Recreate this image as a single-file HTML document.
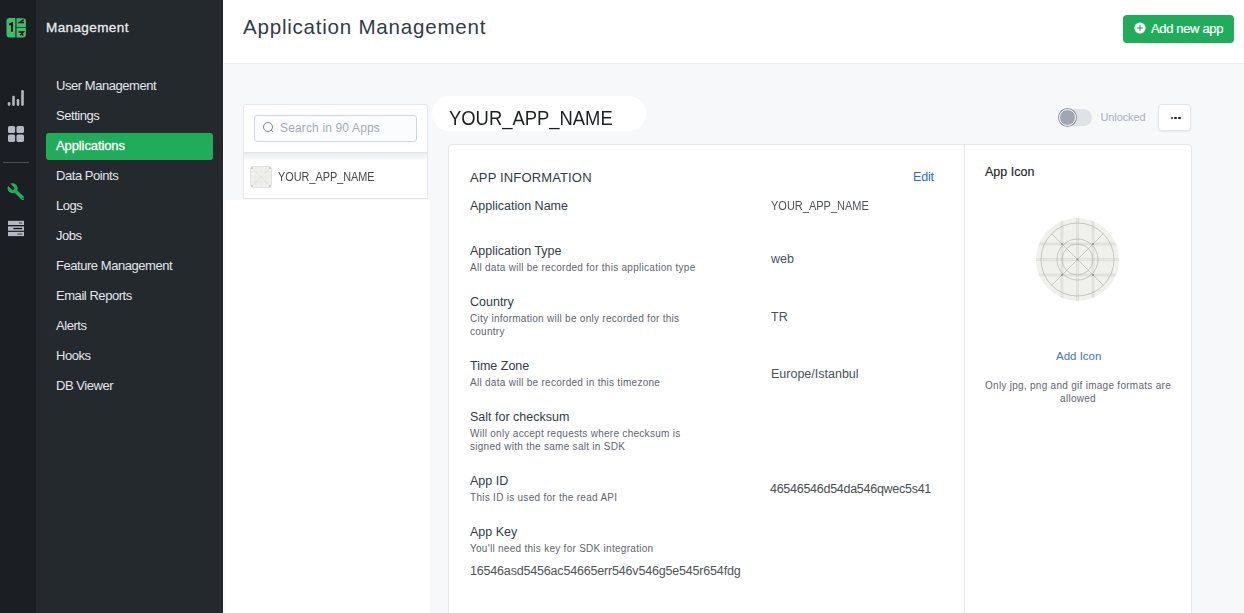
<!DOCTYPE html>
<html><head><meta charset="utf-8">
<style>
*{margin:0;padding:0;box-sizing:border-box}
html,body{width:1244px;height:613px;overflow:hidden}
body{position:relative;background:#f7f8f9;font-family:"Liberation Sans",sans-serif;color:#333c48}
.abs{position:absolute}
#icol{left:0;top:0;width:36px;height:613px;background:#1b1e22}
#menu{left:36px;top:0;width:187px;height:613px;background:#24292e}
#hdr{left:223px;top:0;width:1021px;height:64px;background:#fff;border-bottom:1px solid #e9eaec}
.mi{position:absolute;left:56px;font-size:13px;color:#e3e6ea;white-space:nowrap;line-height:16px;letter-spacing:-0.45px}
#sel{left:46px;top:133px;width:167px;height:27px;background:#1fad5a;border-radius:3px}
.t{position:absolute;white-space:nowrap;line-height:1}
.lab{position:absolute;left:470px;font-size:12.5px;color:#333c48;white-space:nowrap;line-height:1}
.desc{position:absolute;left:470px;font-size:10px;color:#5f6670;white-space:nowrap;line-height:13px;letter-spacing:0.28px}
.val{position:absolute;left:771px;font-size:12.5px;color:#4b525b;white-space:nowrap;line-height:1}
</style></head><body>
<div id="icol" class="abs"></div>
<div id="menu" class="abs"></div>
<div id="hdr" class="abs"></div>

<!-- logo -->
<svg class="abs" style="left:0;top:0" width="36" height="45" viewBox="0 0 36 45">
  <path d="M9.5 18 H15.4 V37.5 H9.5 Q6.5 37.5 6.5 34.5 V21 Q6.5 18 9.5 18 Z" fill="#3fbe6b"/>
  <path d="M16.5 18.2 H23 Q25.9 18.2 25.9 21 V27.2 H16.5 Z" fill="#3fbe6b"/>
  <path d="M16.5 28 H25.9 V34.5 Q25.9 37.5 23 37.5 H16.5 Z" fill="#3fbe6b"/>
  <path d="M9.1 24.6 L12 23.3 V31.7" stroke="#0d0f10" stroke-width="2" fill="none" stroke-linejoin="miter"/>
  <path d="M23.6 19.6 L19.4 22.6 H24" stroke="#0d0f10" stroke-width="1.5" fill="none"/>
  <path d="M18.6 32 H23.4 L20.2 35.2 M21.6 33.8 L23.4 35.4" stroke="#0d0f10" stroke-width="1.4" fill="none"/>
</svg>
<!-- chart icon -->
<svg class="abs" style="left:0;top:80px" width="36" height="30" viewBox="0 80 36 30">
  <g stroke="#b4b9c1" stroke-width="2.6" stroke-linecap="round">
    <line x1="9.1" y1="103.2" x2="9.1" y2="104.6"/>
    <line x1="13.5" y1="97" x2="13.5" y2="104.6"/>
    <line x1="18" y1="100.2" x2="18" y2="104.6"/>
    <line x1="22.5" y1="91.3" x2="22.5" y2="104.6"/>
  </g>
</svg>
<!-- grid icon -->
<svg class="abs" style="left:0;top:116px" width="36" height="36" viewBox="0 116 36 36">
  <g fill="#b4b9c1">
    <rect x="8" y="126" width="7.1" height="7.1" rx="1.6"/>
    <rect x="16.5" y="126" width="7.5" height="7.1" rx="1.6"/>
    <rect x="8" y="134.5" width="7.1" height="7.4" rx="1.6"/>
    <rect x="16.5" y="134.5" width="7.5" height="7.4" rx="1.6"/>
  </g>
</svg>
<div class="abs" style="left:3px;top:162px;width:26px;height:1px;background:#4a4f56"></div>
<!-- wrench -->
<svg class="abs" style="left:6px;top:181px" width="22" height="22" viewBox="0 0 22 22">
  <defs><mask id="wm"><rect width="22" height="22" fill="#fff"/>
    <path d="M6.8 7.3 L1 1.5" stroke="#000" stroke-width="3.2" stroke-linecap="round"/>
  </mask></defs>
  <g mask="url(#wm)" fill="#1fb05b">
    <circle cx="6.6" cy="7.2" r="5"/>
    <path d="M6.6 7.2 L16.8 17.2" stroke="#1fb05b" stroke-width="3.6" stroke-linecap="round"/>
  </g>
  <circle cx="16.9" cy="17.2" r="0.7" fill="#1b1e22"/>
</svg>
<!-- db icon -->
<svg class="abs" style="left:0;top:206px" width="36" height="40" viewBox="0 206 36 40">
  <g fill="#b4b9c1">
    <rect x="8" y="220.8" width="16" height="4.2"/>
    <rect x="8" y="226.4" width="16" height="4.3"/>
    <rect x="8" y="231.9" width="16" height="4.2"/>
  </g>
  <g fill="#5b6068">
    <rect x="19" y="222.3" width="3.2" height="1.4"/>
    <rect x="13.4" y="227.9" width="8.8" height="1.3" fill="#111"/>
    <rect x="17.4" y="233.4" width="4.8" height="1.4"/>
  </g>
</svg>

<div id="sel" class="abs"></div>
<div class="t" style="left:46px;top:21px;font-size:13.5px;color:#e9ebee;-webkit-text-stroke:0.3px #e9ebee;letter-spacing:0.4px">Management</div>
<div class="mi" style="top:78px">User Management</div>
<div class="mi" style="top:108px">Settings</div>
<div class="mi" style="top:138px;color:#fff;letter-spacing:-0.1px;-webkit-text-stroke:0.3px #fff">Applications</div>
<div class="mi" style="top:168px">Data Points</div>
<div class="mi" style="top:198px">Logs</div>
<div class="mi" style="top:228px">Jobs</div>
<div class="mi" style="top:258px">Feature Management</div>
<div class="mi" style="top:288px">Email Reports</div>
<div class="mi" style="top:318px">Alerts</div>
<div class="mi" style="top:348px">Hooks</div>
<div class="mi" style="top:378px">DB Viewer</div>

<div class="t" style="left:243px;top:16.5px;font-size:20.6px;color:#333c48;letter-spacing:0.75px">Application Management</div>

<!-- Add new app -->
<div class="abs" style="left:1123px;top:15px;width:111px;height:28px;background:#1fad5a;border-radius:4px"></div>
<svg class="abs" style="left:1134px;top:22px" width="12" height="12" viewBox="0 0 12 12">
  <circle cx="6" cy="6" r="5.6" fill="#fff"/>
  <path d="M6 3 V9 M3 6 H9" stroke="#2b7a4c" stroke-width="0.9"/>
</svg>
<div class="t" style="left:1151px;top:22px;font-size:13px;color:#fff;letter-spacing:-0.35px;-webkit-text-stroke:0.2px #fff">Add new app</div>

<!-- left panel -->
<div class="abs" style="left:223px;top:0;width:1px;height:613px;background:#fcfcfd"></div>
<div class="abs" style="left:224px;top:199.5px;width:206px;height:414px;background:linear-gradient(90deg,#f7f8f9,#fff 3px)"></div>
<div class="abs" style="left:243px;top:104px;width:185px;height:95px;background:#fff;border:1px solid #e8e8ea;border-bottom:1px solid #e6e6e8;border-radius:3px 3px 0 0"></div>
<div class="abs" style="left:244px;top:152px;width:183px;height:1px;background:#e3e6ea"></div>
<div class="abs" style="left:244px;top:153px;width:183px;height:8px;background:linear-gradient(#ebecef,#fff)"></div>
<div class="abs" style="left:254px;top:115px;width:163px;height:27px;border:1px solid #cfd6e2;border-radius:3px;background:#fbfcfe"></div>
<svg class="abs" style="left:262px;top:121px" width="14" height="14" viewBox="0 0 14 14">
  <circle cx="6" cy="6" r="4.5" stroke="#7c848e" stroke-width="1" fill="none"/>
  <path d="M9.2 9.2 L10.9 10.9" stroke="#7c848e" stroke-width="1"/>
</svg>
<div class="t" style="left:280px;top:122px;font-size:12px;color:#a4abb5;letter-spacing:0.15px">Search in 90 Apps</div>
<svg class="abs" style="left:250px;top:166px" width="22" height="22" viewBox="0 0 22 22">
  <rect x="0.5" y="0.5" width="21" height="21" rx="2.5" fill="#f0f0ed" stroke="#dcdcd8" stroke-width="0.8"/>
  <path d="M2 2 L20 20 M20 2 L2 20" stroke="#d2d2cd" stroke-width="0.5"/>
  <path d="M6 1 V21 M11 1 V21 M16 1 V21 M1 6 H21 M1 11 H21 M1 16 H21" stroke="#e2e2de" stroke-width="0.5"/>
  <circle cx="2" cy="2" r="0.8" fill="#aaa"/><circle cx="20" cy="2" r="0.8" fill="#aaa"/><circle cx="2" cy="20" r="0.8" fill="#aaa"/><circle cx="20" cy="20" r="0.8" fill="#aaa"/>
</svg>
<div class="t" style="left:277.5px;top:171px;font-size:12px;color:#45484b;transform:scaleX(0.905);transform-origin:0 0">YOUR_APP_NAME</div>

<!-- title blob -->
<div class="abs" style="left:432px;top:96px;width:214px;height:35px;background:#fff;border-radius:18px"></div>
<div class="t" style="left:449px;top:108px;font-size:20.5px;color:#1d1f21;transform:scaleX(0.898);transform-origin:0 0">YOUR_APP_NAME</div>

<!-- toggle -->
<div class="abs" style="left:1059px;top:109px;width:33px;height:17px;background:#dfe2e6;border-radius:9px"></div>
<div class="abs" style="left:1058.6px;top:108.6px;width:17.6px;height:17.6px;background:#a0a7b1;border-radius:50%;border:1.6px solid #fff;box-shadow:0 0 0 1px #8f969f"></div>
<div class="t" style="left:1100.5px;top:112px;font-size:11px;color:#a7b0bc;letter-spacing:-0.1px">Unlocked</div>
<div class="abs" style="left:1158px;top:104px;width:33px;height:27px;background:#fff;border-radius:4px;border:1px solid #e3e6ea;box-shadow:0 1px 2px rgba(0,0,0,0.07)"></div>
<div class="abs" style="left:1170.5px;top:116.5px;width:2.6px;height:2.6px;background:#1b1f24;border-radius:50%"></div>
<div class="abs" style="left:1174.3px;top:116.5px;width:2.6px;height:2.6px;background:#1b1f24;border-radius:50%"></div>
<div class="abs" style="left:1178.1px;top:116.5px;width:2.6px;height:2.6px;background:#1b1f24;border-radius:50%"></div>

<!-- card -->
<div class="abs" style="left:448px;top:144px;width:744px;height:480px;background:#fff;border:1px solid #e7e8ea;border-radius:4px"></div>
<div class="abs" style="left:964px;top:145px;width:1px;height:468px;background:#e7e8ea"></div>

<div class="t" style="left:470px;top:171px;font-size:13px;color:#333c48;letter-spacing:0.15px">APP INFORMATION</div>
<div class="t" style="left:913px;top:171px;font-size:12.5px;color:#2b6cd4;letter-spacing:-0.2px">Edit</div>

<div class="lab" style="top:200px">Application Name</div>
<div class="val" style="top:200px;color:#505357;transform:scaleX(0.88);transform-origin:0 0">YOUR_APP_NAME</div>

<div class="lab" style="top:245px">Application Type</div>
<div class="desc" style="top:261px">All data will be recorded for this application type</div>
<div class="val" style="top:253px">web</div>

<div class="lab" style="top:296px">Country</div>
<div class="desc" style="top:312px">City information will be only recorded for this<br>country</div>
<div class="val" style="top:311px">TR</div>

<div class="lab" style="top:360px">Time Zone</div>
<div class="desc" style="top:376px">All data will be recorded in this timezone</div>
<div class="val" style="top:368px">Europe/Istanbul</div>

<div class="lab" style="top:411px">Salt for checksum</div>
<div class="desc" style="top:427px">Will only accept requests where checksum is<br>signed with the same salt in SDK</div>

<div class="lab" style="top:475px">App ID</div>
<div class="desc" style="top:491px">This ID is used for the read API</div>
<div class="val" style="top:483px;left:770px;color:#4a4d51;letter-spacing:-0.27px">46546546d54da546qwec5s41</div>

<div class="lab" style="top:526px">App Key</div>
<div class="desc" style="top:542px">You'll need this key for SDK integration</div>
<div class="val" style="top:564.5px;left:470px;color:#505357;letter-spacing:-0.18px">16546asd5456ac54665err546v546g5e545r654fdg</div>

<div class="t" style="left:985px;top:166px;font-size:12.5px;color:#1f2327;-webkit-text-stroke:0.15px #1f2327">App Icon</div>
<svg class="abs" style="left:1036px;top:218px" width="84" height="84" viewBox="0 0 84 84">
  <defs><clipPath id="cc"><circle cx="41.5" cy="41.5" r="41.5"/></clipPath></defs>
  <circle cx="41.5" cy="41.5" r="41.5" fill="#f0f0ed"/>
  <g clip-path="url(#cc)" stroke="#cfcfca" stroke-width="0.6" fill="none">
    <path d="M25.2 0 V84 M26.8 0 V84 M40.7 0 V84 M42.3 0 V84 M56.2 0 V84 M57.8 0 V84"/>
    <path d="M0 25.2 H84 M0 26.8 H84 M0 40.7 H84 M0 42.3 H84 M0 56.2 H84 M0 57.8 H84"/>
  </g>
  <g stroke="#b4b4af" stroke-width="0.7" fill="none">
    <circle cx="41.5" cy="41.5" r="36.5"/>
    <circle cx="41.5" cy="41.5" r="20.5"/>
    <circle cx="41.5" cy="41.5" r="15.5"/>
    <line x1="15.5" y1="15.5" x2="67.5" y2="67.5"/>
    <line x1="67.5" y1="15.5" x2="15.5" y2="67.5"/>
  </g>
  <g fill="#8f8f8a"><circle cx="26" cy="26" r="1"/><circle cx="57" cy="26" r="1"/><circle cx="26" cy="57" r="1"/><circle cx="57" cy="57" r="1"/><circle cx="41.5" cy="41.5" r="1"/></g>
</svg>
<div class="t" style="left:1056px;top:351px;font-size:11.5px;color:#4573cc">Add Icon</div>
<div class="t" style="left:978px;top:380px;width:200px;text-align:center;white-space:normal;font-size:10px;line-height:12.5px;color:#5f6670;letter-spacing:0.28px">Only jpg, png and gif image formats are allowed</div>

</body></html>
